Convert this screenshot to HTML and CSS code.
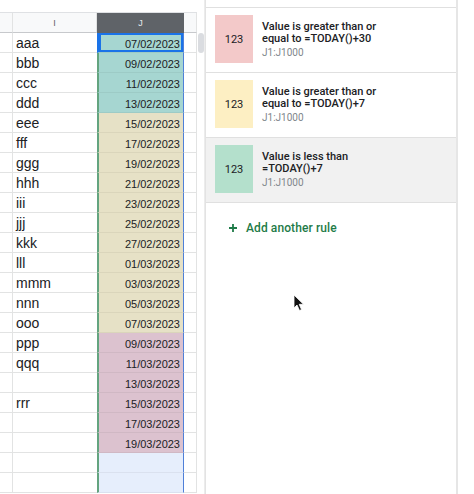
FILE: index.html
```html
<!DOCTYPE html>
<html lang="en">
<head>
    <meta charset="UTF-8">
    <title>Conditional format rules</title>
    <link rel="stylesheet" href="styles.css">
</head>
<body>
<div class="screen">

    <!-- sheet grid -->
    <div class="sheet">
        <div class="grid-area">
            <div class="top-strip"></div>
            <div class="row head">
                <div class="cell h"></div>
                <div class="cell i">I</div>
                <div class="cell j">J</div>
                <div class="cell k"></div>
            </div>
            <div class="row"><div class="cell h"></div><div class="cell i">aaa</div><div class="cell j green active">07/02/2023</div><div class="cell k"></div></div>
            <div class="row"><div class="cell h"></div><div class="cell i">bbb</div><div class="cell j green">09/02/2023</div><div class="cell k"></div></div>
            <div class="row"><div class="cell h"></div><div class="cell i">ccc</div><div class="cell j green">11/02/2023</div><div class="cell k"></div></div>
            <div class="row"><div class="cell h"></div><div class="cell i">ddd</div><div class="cell j green">13/02/2023</div><div class="cell k"></div></div>
            <div class="row"><div class="cell h"></div><div class="cell i">eee</div><div class="cell j yellow">15/02/2023</div><div class="cell k"></div></div>
            <div class="row"><div class="cell h"></div><div class="cell i">fff</div><div class="cell j yellow">17/02/2023</div><div class="cell k"></div></div>
            <div class="row"><div class="cell h"></div><div class="cell i">ggg</div><div class="cell j yellow">19/02/2023</div><div class="cell k"></div></div>
            <div class="row"><div class="cell h"></div><div class="cell i">hhh</div><div class="cell j yellow">21/02/2023</div><div class="cell k"></div></div>
            <div class="row"><div class="cell h"></div><div class="cell i">iii</div><div class="cell j yellow">23/02/2023</div><div class="cell k"></div></div>
            <div class="row"><div class="cell h"></div><div class="cell i">jjj</div><div class="cell j yellow">25/02/2023</div><div class="cell k"></div></div>
            <div class="row"><div class="cell h"></div><div class="cell i">kkk</div><div class="cell j yellow">27/02/2023</div><div class="cell k"></div></div>
            <div class="row"><div class="cell h"></div><div class="cell i">lll</div><div class="cell j yellow">01/03/2023</div><div class="cell k"></div></div>
            <div class="row"><div class="cell h"></div><div class="cell i">mmm</div><div class="cell j yellow">03/03/2023</div><div class="cell k"></div></div>
            <div class="row"><div class="cell h"></div><div class="cell i">nnn</div><div class="cell j yellow">05/03/2023</div><div class="cell k"></div></div>
            <div class="row"><div class="cell h"></div><div class="cell i">ooo</div><div class="cell j yellow">07/03/2023</div><div class="cell k"></div></div>
            <div class="row"><div class="cell h"></div><div class="cell i">ppp</div><div class="cell j pink">09/03/2023</div><div class="cell k"></div></div>
            <div class="row"><div class="cell h"></div><div class="cell i">qqq</div><div class="cell j pink">11/03/2023</div><div class="cell k"></div></div>
            <div class="row"><div class="cell h"></div><div class="cell i"></div><div class="cell j pink">13/03/2023</div><div class="cell k"></div></div>
            <div class="row"><div class="cell h"></div><div class="cell i">rrr</div><div class="cell j pink">15/03/2023</div><div class="cell k"></div></div>
            <div class="row"><div class="cell h"></div><div class="cell i"></div><div class="cell j pink">17/03/2023</div><div class="cell k"></div></div>
            <div class="row"><div class="cell h"></div><div class="cell i"></div><div class="cell j pink">19/03/2023</div><div class="cell k"></div></div>
            <div class="row"><div class="cell h"></div><div class="cell i"></div><div class="cell j empty"></div><div class="cell k"></div></div>
            <div class="row"><div class="cell h"></div><div class="cell i"></div><div class="cell j empty"></div><div class="cell k"></div></div>
        </div>
        <div class="vscroll">
            <div class="thumb"></div>
        </div>
    </div>

    <!-- conditional format side panel -->
    <div class="panel">
        <div class="rules">
            <div class="rule">
                <div class="swatch swatch-pink">123</div>
                <div class="rule-text">
                    <div class="rule-title">Value is greater than or<br>equal to =TODAY()+30</div>
                    <div class="rule-range">J1:J1000</div>
                </div>
            </div>
            <div class="rule">
                <div class="swatch swatch-yellow">123</div>
                <div class="rule-text">
                    <div class="rule-title">Value is greater than or<br>equal to =TODAY()+7</div>
                    <div class="rule-range">J1:J1000</div>
                </div>
            </div>
            <div class="rule hover">
                <div class="swatch swatch-green">123</div>
                <div class="rule-text">
                    <div class="rule-title">Value is less than<br>=TODAY()+7</div>
                    <div class="rule-range">J1:J1000</div>
                </div>
            </div>
        </div>

        <div class="add-rule">
            <svg class="plus" width="8" height="8" viewBox="0 0 8 8">
                <path d="M4 0 V8 M0 4 H8" />
            </svg>
            <span>Add another rule</span>
        </div>

        <!-- mouse pointer -->
        <svg class="cursor" width="12" height="18" viewBox="0 0 12 18">
            <path d="M1 1 L1 14 L4 11 L6.5 16.5 L8.5 15.6 L6.2 10.3 L10.5 10.3 Z" />
        </svg>
    </div>

    <div class="edge"></div>
</div>
</body>
</html>
```

FILE: styles.css
```css
/* page */
body {
    margin: 0;
    background: #ffffff;
}

.screen {
    display: flex;
    width: 474px;
    height: 494px;
    overflow: hidden;
}

/* sheet */
.sheet {
    display: flex;
    width: 205px;
    flex: none;
}

.grid-area {
    width: 197px;
    font-family: "Liberation Sans", Arial, sans-serif;
    color: #202124;
}

.top-strip {
    height: 12px;
    border-bottom: 1px solid #dfe1e4;
}

.row {
    display: flex;
    height: 20px;
}

.cell {
    box-sizing: border-box;
    height: 20px;
    border-bottom: 1px solid #e2e3e3;
    white-space: nowrap;
    overflow: hidden;
}

.cell.h {
    width: 13px;
    border-right: 1px solid #e2e3e3;
}

.cell.i {
    width: 84px;
    padding-left: 3px;
    font-size: 14px;
    line-height: 20px;
}

.cell.j {
    width: 87px;
    border-left: 2px solid #63a47f;
    border-right: 1px solid #4f80d8;
    border-bottom-color: rgba(0, 0, 0, 0.05);
    text-align: right;
    padding: 1px 3px 0 0;
    font-size: 11px;
    line-height: 20px;
}

.cell.k {
    width: 13px;
    border-right: 1px solid #e2e3e3;
}

/* header row */
.row.head {
    height: 20px;
}

.row.head .cell {
    background: #f8f9fa;
    border-bottom: 1px solid #c7c9cc;
    font-size: 9px;
    line-height: 20px;
    color: #5f6368;
    text-align: center;
    padding: 0;
}

.row.head .cell.i {
    border-right: 1px solid #e2e3e3;
}

.row.head .cell.j {
    background: #5f6368;
    color: #e8eaed;
    border-left: 1px solid #5f6368;
    border-right: 1px solid #5f6368;
    border-bottom-color: #5f6368;
}

/* conditional colours under the selection tint */
.cell.green  { background: #a6d6d1; }
.cell.yellow { background: #e6e1c6; }
.cell.pink   { background: #dcc2cf; }
.cell.empty  { background: #e6eefc; }

.cell.active {
    box-shadow: inset 0 0 0 2px #1a73e8;
    border-left-color: #1a73e8;
}

/* vertical scrollbar */
.vscroll {
    width: 8px;
    box-sizing: border-box;
    border-right: 1px solid #ececec;
}

.thumb {
    width: 6px;
    height: 20px;
    margin: 33px 0 0 1px;
    border-radius: 3px;
    background: #dadce0;
}

/* side panel */
.panel {
    position: relative;
    width: 253px;
    flex: none;
    box-sizing: border-box;
    border-left: 1px solid #e3e3e3;
    border-right: 2px solid #e6e6e6;
    padding-top: 7px;
    font-family: Roboto, "Liberation Sans", sans-serif;
}

.rule {
    display: flex;
    gap: 9px;
    height: 65px;
    box-sizing: border-box;
    padding: 7px 9px 0 9px;
    border-top: 1px solid #e0e0e0;
}

.rule:last-child {
    border-bottom: 1px solid #e0e0e0;
    height: 66px;
}

.rule.hover {
    background: #f1f1f1;
}

.swatch {
    width: 38px;
    height: 48px;
    flex: none;
    display: flex;
    align-items: center;
    justify-content: center;
    font-size: 11px;
    color: #202124;
}

.swatch-pink   { background: #f3c9c9; }
.swatch-yellow { background: #fdefc3; }
.swatch-green  { background: #b4e0cc; }

.rule-text {
    padding-top: 6px;
}

.rule-title {
    font-size: 11px;
    line-height: 11.5px;
    font-weight: 500;
    color: #202124;
}

.rule-range {
    margin-top: 3px;
    font-size: 10px;
    line-height: 12px;
    color: #80868b;
}

.add-rule {
    display: flex;
    align-items: center;
    gap: 9px;
    padding: 18px 0 0 23px;
    font-size: 12px;
    font-weight: 500;
    letter-spacing: 0.1px;
    color: #1e7b48;
}

.plus path {
    stroke: #1e7b48;
    stroke-width: 1.8;
    fill: none;
}

.cursor {
    position: absolute;
    left: 87px;
    top: 294px;
}

.cursor path {
    fill: #111111;
    stroke: #ffffff;
    stroke-width: 0.8;
}

.edge {
    flex: 1;
}
```
